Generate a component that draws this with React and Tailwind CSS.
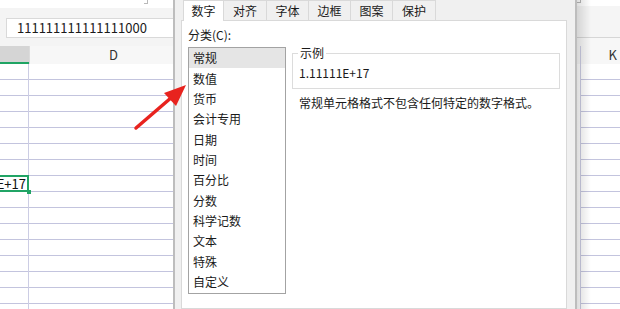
import React from "react";

const F = { fontFamily: '"Noto Sans CJK SC", "Noto Sans", sans-serif' };

const rows = Array.from({ length: 15 });
const cats = ["常规", "数值", "货币", "会计专用", "日期", "时间", "百分比", "分数", "科学记数", "文本", "特殊", "自定义"];
const tabs = [
  { t: "数字", w: "w-[41px]", active: true },
  { t: "对齐", w: "w-[43px]" },
  { t: "字体", w: "w-[42px]" },
  { t: "边框", w: "w-[42px]" },
  { t: "图案", w: "w-[42px]" },
  { t: "保护", w: "w-[43px]" },
];

function LeftPane() {
  return (
    <div className="w-[173px] shrink-0 h-full flex flex-col overflow-hidden bg-white">
      <div className="h-[8px] bg-white relative shrink-0">
        <div className="absolute left-[144px] top-0 w-[4px] h-[4px] border-r border-b border-[#b9b9b9]" />
      </div>
      <div className="h-[38px] shrink-0 bg-[#f4f4f4] pt-[10px] pl-[6px]">
        <div className="h-[20px] w-[200px] bg-white border border-[#d9d9d9] flex items-center pl-[10px] text-[13px] text-[#1b1b1b]" style={F}>
          111111111111111000
        </div>
      </div>
      <div className="h-[18px] shrink-0 flex">
        <div className="w-[29px] shrink-0 h-full bg-[#d5d5d5] border-b-2 border-[#1fa463]" />
        <div className="w-[168px] shrink-0 h-full bg-[#f7f7f7] border-l border-[#dcdcdc] flex items-center justify-center text-[13px] text-[#333]" style={F}>D</div>
      </div>
      <div className="flex-1 flex">
        <div className="w-[29px] shrink-0 flex flex-col border-r border-[#cccde4]">
          {rows.map((_, i) => (
            <div key={i} className="h-[16px] shrink-0 border-b border-[#c3c4de] relative">
              {i === 7 && (
                <div className="absolute left-[-8px] right-[-1px] top-[-1px] h-[17px] border-2 border-[#21a465] flex items-center justify-end pr-[1px] overflow-hidden text-[13px] text-[#111] bg-white whitespace-nowrap" style={F}>
                  1.11111E+17
                </div>
              )}
              {i === 7 && <div className="absolute right-[-3px] bottom-[-3px] w-[4px] h-[4px] bg-[#21a465] z-10" />}
            </div>
          ))}
        </div>
        <div className="flex-1 flex flex-col">
          {rows.map((_, i) => (
            <div key={i} className="h-[16px] shrink-0 border-b border-[#c3c4de]" />
          ))}
        </div>
      </div>
    </div>
  );
}

function RightPane() {
  return (
    <div className="flex-1 h-full flex flex-col overflow-hidden bg-white relative">
      <div className="h-[6px] bg-white relative shrink-0">
        <div className="absolute left-[0px] top-0 w-[4px] h-[3px] border-r border-b border-[#b9b9b9]" />
      </div>
      <div className="h-[32px] shrink-0 bg-[#f5f5f5] border-b border-[#d6d6d6]" />
      <div className="h-[8px] shrink-0 bg-[#f7f7f7]" />
      <div className="h-[18px] shrink-0 flex bg-[#f7f7f7]">
        <div className="w-[4px] border-r border-[#cccde4]" />
        <div className="flex-1 flex items-center justify-end pr-[3px] text-[13px] text-[#333]" style={F}>K</div>
      </div>
      <div className="flex-1 flex">
        <div className="w-[4px] border-r border-[#cccde4]" />
        <div className="flex-1 flex flex-col">
          {rows.map((_, i) => (
            <div key={i} className="h-[16px] shrink-0 border-b border-[#c3c4de]" />
          ))}
        </div>
      </div>
      <div className="absolute left-0 top-0 bottom-0 w-[14px] bg-gradient-to-r from-[#00000022] to-transparent" />
    </div>
  );
}

function Dialog() {
  return (
    <div className="w-[404px] shrink-0 h-full bg-[#f0f0f0] border-l-2 border-r-2 border-[#bdbdbd] flex flex-col pl-[6px] pr-[8px] text-[12px] text-[#1a1a1a]" style={F}>
      <div className="h-[20px] shrink-0 flex pl-[2px]">
        {tabs.map((tb) => (
          <div
            key={tb.t}
            className={`${tb.w} shrink-0 flex items-center justify-center border-t border-r border-[#d9d9d9] ${tb.active ? "bg-white border-l h-[21px] relative z-10" : "bg-[#f0f0f0] h-[20px]"}`}
          >
            {tb.t}
          </div>
        ))}
      </div>
      <div className="flex-1 bg-white border border-[#d9d9d9] flex flex-col pl-[6px]">
        <div className="pt-[6px] leading-[16px] mb-[4px]">分类(C):</div>
        <div className="flex gap-[6px]">
          <div className="w-[98px] h-[247px] shrink-0 border border-[#a3a3a3] flex flex-col">
            {cats.map((c, i) => (
              <div key={c} className={`h-[20.36px] shrink-0 flex items-center pl-[4px] ${i === 0 ? "bg-[#e5e5e5]" : ""}`}>
                {c}
              </div>
            ))}
          </div>
          <div className="flex-1 flex flex-col pr-[6px]">
            <div className="relative mt-[6px] h-[36px] border border-[#dcdcdc] flex items-center pl-[6px] pt-[4px]">
              <div className="absolute left-[5px] top-[-9px] bg-white px-[2px] leading-[16px]">示例</div>
              1.11111E+17
            </div>
            <div className="mt-[6px] pl-[7px] leading-[16px]">常规单元格格式不包含任何特定的数字格式。</div>
          </div>
        </div>
      </div>
    </div>
  );
}

export default function App() {
  return (
    <div className="w-[620px] h-[309px] overflow-hidden relative flex bg-white">
      <LeftPane />
      <Dialog />
      <RightPane />
      <svg className="absolute left-0 top-0 pointer-events-none" width="620" height="309">
        <line x1="136" y1="128" x2="172" y2="97" stroke="#e8231e" strokeWidth="3.5" strokeLinecap="round" />
        <polygon points="186,85 164,93 176,106" fill="#e8231e" />
      </svg>
    </div>
  );
}
